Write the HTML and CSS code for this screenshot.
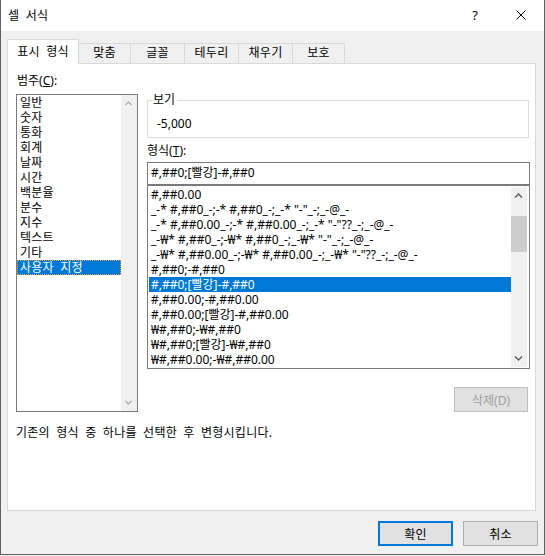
FILE: index.html
```html
<!DOCTYPE html>
<html lang="ko">
<head>
<meta charset="utf-8">
<title>셀 서식</title>
<link rel="stylesheet" href="styles.css">
</head>
<body>
<div class="window">
  <div class="titlebar">
    <span class="title ko">셀 서식</span>
    <span class="caption-btn help">?</span>
    <span class="caption-btn close">
      <svg class="close-icon" width="10" height="10" viewBox="0 0 10 10"><path d="M0.5 0.5 9.5 9.5 M9.5 0.5 0.5 9.5"/></svg>
    </span>
  </div>

  <div class="tabs">
    <div class="tab ko active w72">표시 형식</div>
    <div class="tab ko w52">맞춤</div>
    <div class="tab ko w54">글꼴</div>
    <div class="tab ko w54">테두리</div>
    <div class="tab ko w54">채우기</div>
    <div class="tab ko w52">보호</div>
  </div>

  <div class="panel">
    <div class="main">
      <div class="left-col">
        <div class="label cat-label">범주(<u>C</u>):</div>
        <div class="listbox cat-list">
          <ul class="items cat-items ko">
            <li>일반</li>
            <li>숫자</li>
            <li>통화</li>
            <li>회계</li>
            <li>날짜</li>
            <li>시간</li>
            <li>백분율</li>
            <li>분수</li>
            <li>지수</li>
            <li>텍스트</li>
            <li>기타</li>
            <li class="selected focused">사용자 지정</li>
          </ul>
          <div class="vscroll disabled">
            <div class="sb-btn"><svg width="16" height="17" viewBox="0 0 16 17"><path d="M4.5 10 7.5 7 10.5 10"/></svg></div>
            <div class="sb-btn"><svg width="16" height="17" viewBox="0 0 16 17"><path d="M4.5 7 7.5 10 10.5 7"/></svg></div>
          </div>
        </div>
      </div>

      <div class="right-col">
        <div class="sample">
          <div class="sample-legend">보기</div>
          <div class="sample-value">-5,000</div>
        </div>
        <div class="label fmt-label">형식(<u>T</u>):</div>
        <div class="textbox">#,##0;[빨강]-#,##0</div>
        <div class="listbox fmt-list">
          <ul class="items fmt-items">
            <li>#,##0.00</li>
            <li>_-* #,##0_-;-* #,##0_-;_-* "-"_-;_-@_-</li>
            <li>_-* #,##0.00_-;-* #,##0.00_-;_-* "-"??_-;_-@_-</li>
            <li>_-₩* #,##0_-;-₩* #,##0_-;_-₩* "-"_-;_-@_-</li>
            <li>_-₩* #,##0.00_-;-₩* #,##0.00_-;_-₩* "-"??_-;_-@_-</li>
            <li>#,##0;-#,##0</li>
            <li class="selected">#,##0;[빨강]-#,##0</li>
            <li>#,##0.00;-#,##0.00</li>
            <li>#,##0.00;[빨강]-#,##0.00</li>
            <li>₩#,##0;-₩#,##0</li>
            <li>₩#,##0;[빨강]-₩#,##0</li>
            <li>₩#,##0.00;-₩#,##0.00</li>
          </ul>
          <div class="vscroll">
            <div class="sb-btn"><svg width="16" height="17" viewBox="0 0 16 17"><path d="M4 10.5 7.5 7 11 10.5"/></svg></div>
            <div class="sb-track"><div class="sb-thumb"></div></div>
            <div class="sb-btn"><svg width="16" height="17" viewBox="0 0 16 17"><path d="M4 6.5 7.5 10 11 6.5"/></svg></div>
          </div>
        </div>
        <div class="delete-row">
          <button class="btn delete" disabled>삭제(D)</button>
        </div>
      </div>
    </div>
    <div class="desc ko">기존의 형식 중 하나를 선택한 후 변형시킵니다.</div>
  </div>

  <div class="footer">
    <button class="btn ko default">확인</button>
    <button class="btn ko">취소</button>
  </div>
</div>
</body>
</html>
```

FILE: styles.css
```css
* {
  box-sizing: border-box;
}

html,
body {
  margin: 0;
  padding: 0;
}

body {
  background: #f0f0f0;
  font-family: "Noto Sans", "Noto Sans CJK KR", sans-serif;
  font-size: 12px;
  color: #000;
}

/* Korean runs: Malgun Gothic sets Hangul and spaces a little wider */
.ko {
  word-spacing: 3px;
  letter-spacing: 0.25px;
}

.window {
  width: 545px;
  height: 555px;
  background: #f0f0f0;
  border: 1px solid #5f5f5f;
  border-top: 0;
  display: flex;
  flex-direction: column;
}

/* title bar */
.titlebar {
  height: 31px;
  flex-shrink: 0;
  background: #fff;
  display: flex;
  align-items: center;
}

.title {
  flex: 1;
  margin-left: 7px;
  line-height: 16px;
}

.caption-btn {
  width: 46px;
  height: 31px;
  display: flex;
  align-items: center;
  justify-content: center;
}

.help {
  font-size: 13px;
  padding-bottom: 2px;
}

.close-icon {
  margin-bottom: 2px;
}

.close-icon path {
  fill: none;
  stroke: #000;
  stroke-width: 1;
}

/* tabs */
.tabs {
  height: 32px;
  flex-shrink: 0;
  display: flex;
  align-items: flex-end;
  margin-left: 6px;
}

.tab {
  height: 20px;
  line-height: 17px;
  border-top: 1px solid #d9d9d9;
  border-right: 1px solid #d9d9d9;
  background: #f0f0f0;
  text-align: center;
  white-space: nowrap;
}

.tab.active {
  height: 25px;
  line-height: 22px;
  padding-top: 1px;
  border-left: 1px solid #d9d9d9;
  background: #fff;
  margin-bottom: -1px;
  position: relative;
  z-index: 1;
}

.w72 { width: 72px; }
.w52 { width: 52px; }
.w54 { width: 54px; }

/* panel */
.panel {
  margin: 0 8px 0 6px;
  height: 448px;
  flex-shrink: 0;
  background: #fff;
  border: 1px solid #d9d9d9;
  display: flex;
  flex-direction: column;
}

.main {
  display: flex;
  padding-left: 8px;
}

.label {
  line-height: 14px;
  white-space: nowrap;
}

.left-col {
  width: 122px;
}

.cat-label {
  margin-top: 10px;
  padding-left: 1px;
}

.listbox {
  border: 1px solid #7a7a7a;
  display: flex;
  background: #fff;
}

.items {
  flex: 1;
  list-style: none;
  margin: 0;
  padding: 0;
  overflow: hidden;
}

.items li {
  height: 15px;
  line-height: 15px;
  white-space: nowrap;
}

.selected {
  background: #0078d7;
  color: #fff;
}

.cat-list {
  margin-top: 6px;
  height: 318px;
}

.cat-items li {
  padding-left: 3px;
}

.cat-items .focused {
  outline: 1px dotted #e3a448;
  outline-offset: -1px;
}

.vscroll {
  width: 16px;
  flex-shrink: 0;
  background: #f0f0f0;
  display: flex;
  flex-direction: column;
  justify-content: space-between;
}

.sb-btn {
  height: 17px;
  flex-shrink: 0;
}

.sb-btn svg {
  display: block;
}

.sb-btn path {
  fill: none;
  stroke: #606060;
  stroke-width: 1.5;
}

.vscroll.disabled .sb-btn path {
  stroke: #a8a8a8;
  stroke-width: 1.2;
}

.sb-track {
  flex: 1;
}

.sb-thumb {
  margin-top: 12px;
  height: 36px;
  background: #cdcdcd;
}

/* right column */
.right-col {
  margin-left: 9px;
  width: 383px;
}

.sample {
  margin: 36px 1px 0 0;
  border: 1px solid #dcdcdc;
  padding: 0 9px 6px;
}

.sample-legend {
  width: fit-content;
  margin: -8px 0 0 -4px;
  padding: 0 2px 0 0;
  line-height: 14px;
  background: #fff;
}

.sample-value {
  margin-top: 10px;
  line-height: 14px;
}

.fmt-label {
  margin-top: 6px;
}

.textbox {
  margin-top: 4px;
  height: 23px;
  border: 1px solid #7a7a7a;
  padding-left: 3px;
  line-height: 19px;
  white-space: nowrap;
}

.fmt-list {
  height: 184px;
  padding: 1px 2px 1px 1px;
}

.fmt-items li {
  padding-left: 2px;
}

.delete-row {
  display: flex;
  justify-content: flex-end;
  margin-top: 18px;
  padding-right: 2px;
}

.desc {
  margin-top: 14px;
  padding-left: 8px;
  line-height: 14px;
}

/* buttons */
.btn {
  width: 75px;
  height: 25px;
  padding: 0;
  margin: 0;
  font: inherit;
  color: #000;
  background: #e1e1e1;
  border: 1px solid #adadad;
  display: flex;
  align-items: center;
  justify-content: center;
}

.btn.delete {
  width: 74px;
  color: #a0a0a0;
  border-color: #bfbfbf;
}

.btn.default {
  border: 2px solid #0078d7;
}

.footer {
  display: flex;
  justify-content: flex-end;
  gap: 10px;
  margin-top: 10px;
  padding-right: 6px;
}
```
